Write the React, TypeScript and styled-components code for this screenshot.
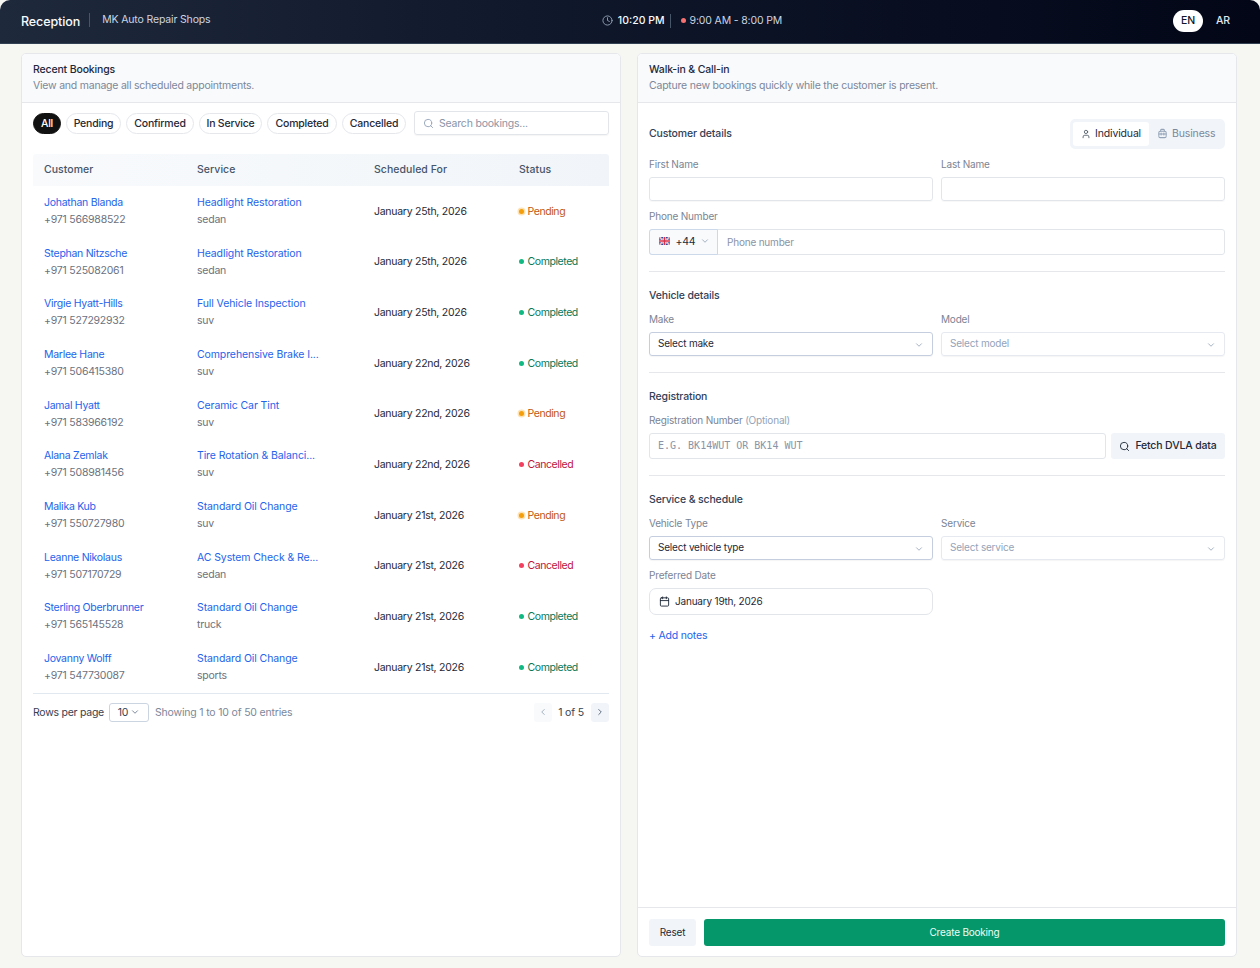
import React from "react";
import styled, { createGlobalStyle } from "styled-components";
import { Calendar, ChevronDown, ChevronLeft, ChevronRight, Clock, Search, User } from "lucide-react";

const Global = createGlobalStyle`
  html, body { margin: 0; padding: 0; height: 100%; background: #f6f7f2; }
  * { box-sizing: border-box; }
  body { font-family: Inter, "Open Sans", sans-serif; color: #111827; font-size: 11px; letter-spacing: -0.15px; }
`;
const Page = styled.div`width: 1260px; height: 968px; overflow: hidden; background: #f6f7f2; display: flex; flex-direction: column;`;
const Header = styled.header`
  height: 44px; flex: none; display: flex; justify-content: space-between; align-items: center; padding: 0 22px 2px 21px;
  background: linear-gradient(90deg, #1e293b 0%, #0f172a 45%, #020617 100%); border-radius: 10px 10px 0 0; border-bottom: 1px solid #334155; color: #fff;
`;
const Brand = styled.div`display: flex; align-items: center; gap: 9px; width: 190px;`;
const BrandName = styled.span`font-size: 12.5px; font-weight: 500; color: #f8fafc; letter-spacing: -0.1px; margin-top: 2px;`;
const Shop = styled.span`font-size: 10.5px; color: #cbd5e1; border-left: 1px solid #475569; padding-left: 12px; line-height: 14px; margin-top: -1px;`;
const Hours = styled.div`display: flex; align-items: center; font-size: 10.5px; color: #cbd5e1; svg { color: #94a3b8; margin-right: 5px; }`;
const Now = styled.span`color: #f8fafc; font-weight: 500; padding-right: 5px; margin-right: 10px; border-right: 1px solid #475569; line-height: 14px; letter-spacing: 0;`;
const RedDot = styled.i`width: 5px; height: 5px; border-radius: 50%; background: #f87171; margin-right: 4px;`;
const Lang = styled.div`display: flex; align-items: center; gap: 5px;`;
const LangItem = styled.span<{ $on?: boolean }>`
  width: 30px; height: 22px; border-radius: 11px; display: flex; align-items: center; justify-content: center; font-size: 10.5px; font-weight: 500;
  background: ${p => (p.$on ? "#fff" : "transparent")}; color: ${p => (p.$on ? "#0f172a" : "#e2e8f0")};
`;
const Main = styled.main`flex: 1; display: grid; grid-template-columns: 600px 600px; gap: 16px; padding: 9px 0 11px 21px;`;
const Card = styled.section`background: #fff; border: 1px solid #e5e7eb; border-radius: 5px; display: flex; flex-direction: column; overflow: hidden;`;
const CardHead = styled.div`height: 49px; flex: none; padding: 9px 11px 0; background: #f9fafc; border-bottom: 1px solid #e5e7eb;`;
const CardTitle = styled.div`font-size: 10.5px; font-weight: 500; color: #1e293b; line-height: 14px;`;
const CardSub = styled.div`font-size: 10.5px; color: #7c879a; line-height: 14px; margin-top: 2px; letter-spacing: -0.22px;`;
const ListBody = styled.div`padding: 8px 11px 0; flex: 1;`;
const Filters = styled.div`display: flex; align-items: center; height: 24px; margin-bottom: 19px;`;
const Chip = styled.span<{ $on?: boolean; $w: number }>`
  height: 21px; width: ${p => p.$w}px; margin-right: 5px; border-radius: 11px; display: flex; align-items: center; justify-content: center; font-size: 10.5px; font-weight: 500; letter-spacing: -0.2px;
  border: 1px solid ${p => (p.$on ? "#111" : "#e5e7eb")}; background: ${p => (p.$on ? "#111" : "#fff")}; color: ${p => (p.$on ? "#fff" : "#1f2937")};
`;
const SearchBox = styled.div`
  margin-left: 3px; width: 195px; height: 24px; border: 1px solid #e2e5ea; border-radius: 3px; display: flex; align-items: center; gap: 5px; padding: 0 8px; color: #8a94a6; font-size: 10.5px; letter-spacing: -0.2px; box-shadow: 0 1px 1px rgba(0,0,0,.04);
  svg { color: #94a3b8; }
`;
const TableGrid = styled.div`display: grid; grid-template-columns: 153px 177px 145px 101px; align-items: center;`;
const TableHead = styled(TableGrid)`height: 32px; padding-bottom: 2px; background: linear-gradient(90deg, #f8fafc, #f1f5f9); border-radius: 3px 3px 0 0; font-size: 10.5px; color: #475569; font-weight: 500; letter-spacing: .05px; span { padding-left: 11px; }`;
const Row = styled(TableGrid)`height: 50.7px;`;
const Cell = styled.div`padding-left: 11px; min-width: 0;`;
const LinkText = styled.div`color: #2563eb; font-size: 10.5px; line-height: 14px; white-space: nowrap; overflow: hidden; text-overflow: ellipsis; letter-spacing: -0.1px;`;
const NameText = styled(LinkText)`letter-spacing: -0.27px;`;
const Muted = styled.div`color: #6b7280; font-size: 10.5px; line-height: 14px; margin-top: 3px; letter-spacing: -0.22px;`;
const DateText = styled.div`padding-left: 11px; font-size: 10.5px; color: #1f2937; letter-spacing: -0.27px; margin-top: -0.4px;`;
const statusColors: Record<string, [string, string]> = {
  Pending: ["#f59e0b", "#c2570c"], Completed: ["#10b981", "#047857"], Cancelled: ["#f43f5e", "#be123c"],
};
const Status = styled.div<{ $s: string }>`
  padding-left: 10.5px; display: flex; align-items: center; gap: 4px; font-size: 10.5px; letter-spacing: -0.42px; margin-top: -0.4px; color: ${p => statusColors[p.$s][1]};
  &::before { content: ""; width: 5px; height: 5px; border-radius: 50%; background: ${p => statusColors[p.$s][0]}; ${p => (p.$s === "Pending" ? "box-shadow: 0 0 0 1.5px rgba(245,158,11,.3);" : "")} }
`;
const Pager = styled.div`border-top: 1px solid #e2e8f0; height: 38px; display: flex; align-items: center; font-size: 10.5px; color: #374151; letter-spacing: -0.25px;`;
const RowsSelect = styled.span`margin: 0 6px 0 5px; width: 40px; height: 19px; border: 1px solid #cbd5e1; border-radius: 3px; display: flex; align-items: center; justify-content: center; gap: 2px; svg { color: #64748b; }`;
const Showing = styled.span`color: #7c879a; flex: 1; letter-spacing: -0.18px;`;
const PageBtn = styled.span<{ $dim?: boolean }>`width: 18px; height: 19px; border-radius: 3px; display: flex; align-items: center; justify-content: center; background: ${p => (p.$dim ? "#f8fafc" : "#f1f5f9")}; color: ${p => (p.$dim ? "#94a3b8" : "#475569")};`;
const PageNo = styled.span`margin: 0 7px 0 6px; color: #374151; letter-spacing: -0.15px;`;
const FormBody = styled.div`flex: 1; padding: 16px 11px 0;`;
const SectionTop = styled.div`display: flex; justify-content: space-between; align-items: center; height: 30px;`;
const SectionTitle = styled.div`font-size: 10.5px; font-weight: 500; color: #334155; line-height: 14px;`;
const Toggle = styled.div`width: 155px; height: 30px; background: #f1f5f9; border-radius: 5px; padding: 3px; display: flex; align-items: center; padding-bottom: 4px;`;
const ToggleItem = styled.span<{ $on?: boolean }>`
  height: 24px; border-radius: 3px; display: flex; align-items: center; gap: 4px; padding: 0 8px; font-size: 10.5px; background: ${p => (p.$on ? "#fff" : "transparent")}; color: ${p => (p.$on ? "#1f2937" : "#7c879a")};
  svg { color: ${p => (p.$on ? "#4b5563" : "#94a3b8")}; }
`;
const TwoCols = styled.div<{ $top: number }>`display: grid; grid-template-columns: 284px 284px; gap: 8px; margin-top: ${p => p.$top}px;`;
const Label = styled.div`font-size: 10px; color: #7b8494; line-height: 13px; margin-bottom: 6px; letter-spacing: -0.18px; em { font-style: normal; color: #94a3b8; }`;
const Field = styled.div<{ $top?: number }>`min-width: 0; margin-top: ${p => p.$top ?? 0}px;`;
const Input = styled.div`height: 24px; border: 1px solid #e2e5ea; border-radius: 3px; box-shadow: 0 1px 1px rgba(0,0,0,.03);`;
const Phone = styled.div`height: 26px; border: 1px solid #e2e5ea; border-radius: 3px; display: flex; align-items: center; color: #8a94a6; font-size: 10px; letter-spacing: -0.2px; padding-bottom: 1px;`;
const Dial = styled.span`width: 69px; height: 26px; margin: -1px 9px -1px -1px; border: 1px solid #cbd9ea; border-radius: 3px 0 0 3px; background: #f8fafc; display: flex; align-items: center; gap: 5.5px; padding-left: 9px; color: #1f2937; font-size: 10.5px; padding-bottom: 1px; svg.c { color: #94a3b8; margin-left: -1px; }`;
const Divider = styled.hr`border: 0; border-top: 1px solid #e5e7eb; margin: 16px 0 17px;`;
const Select = styled.div<{ $off?: boolean }>`
  height: 24px; padding: 0 8px 2px; border: 1px solid ${p => (p.$off ? "#e6e9f0" : "#c5cede")}; border-radius: 3px; display: flex; align-items: center; justify-content: space-between; font-size: 10px; letter-spacing: -0.2px;
  color: ${p => (p.$off ? "#94a3b8" : "#1f2937")}; box-shadow: 0 1px 1px rgba(0,0,0,.04); svg { color: #94a3b8; margin-top: 3px; }
`;
const RegRow = styled.div`display: flex; gap: 5px;`;
const RegInput = styled.div`flex: 1; height: 26px; border: 1px solid #e2e5ea; border-radius: 3px; display: flex; align-items: center; padding: 0 0 2px 8px; font-family: "DejaVu Sans Mono", "Liberation Mono", monospace; font-size: 10px; letter-spacing: 0; color: #8a94a6;`;
const Fetch = styled.div`width: 114px; height: 26px; background: #f1f5f9; border-radius: 3px; display: flex; align-items: center; justify-content: center; gap: 5px; padding-bottom: 1px; font-size: 10.5px; font-weight: 500; color: #1f2937; svg { margin-top: 2px; }`;
const DateBox = styled.div`height: 27px; border: 1px solid #e2e5ea; border-radius: 7px; display: flex; align-items: center; gap: 5px; padding: 0 0 2px 9px; font-size: 10px; letter-spacing: -0.2px; color: #1f2937; svg { margin-top: 2px; }`;
const AddNotes = styled.div`margin-top: 14px; color: #2563eb; font-size: 10.5px; line-height: 14px; letter-spacing: -0.2px;`;
const FormFoot = styled.div`height: 49px; flex: none; border-top: 1px solid #e5e7eb; padding: 11px; display: flex; gap: 8px;`;
const Reset = styled.div`width: 47px; height: 27px; background: #f1f5f9; border-radius: 3px; display: flex; align-items: center; justify-content: center; font-size: 10px; color: #1f2937; padding-bottom: 2px;`;
const Create = styled.div`flex: 1; height: 27px; background: #059669; border-radius: 3px; display: flex; align-items: center; justify-content: center; font-size: 10px; letter-spacing: -0.2px; color: #ecfdf5; padding-bottom: 2px;`;

const chips: [string, number][] = [["All", 28], ["Pending", 55], ["Confirmed", 68], ["In Service", 63], ["Completed", 70], ["Cancelled", 64]];
const rows = [
  ["Johathan Blanda", "+971 566988522", "Headlight Restoration", "sedan", "January 25th, 2026", "Pending"],
  ["Stephan Nitzsche", "+971 525082061", "Headlight Restoration", "sedan", "January 25th, 2026", "Completed"],
  ["Virgie Hyatt-Hills", "+971 527292932", "Full Vehicle Inspection", "suv", "January 25th, 2026", "Completed"],
  ["Marlee Hane", "+971 506415380", "Comprehensive Brake I...", "suv", "January 22nd, 2026", "Completed"],
  ["Jamal Hyatt", "+971 583966192", "Ceramic Car Tint", "suv", "January 22nd, 2026", "Pending"],
  ["Alana Zemlak", "+971 508981456", "Tire Rotation & Balanci...", "suv", "January 22nd, 2026", "Cancelled"],
  ["Malika Kub", "+971 550727980", "Standard Oil Change", "suv", "January 21st, 2026", "Pending"],
  ["Leanne Nikolaus", "+971 507170729", "AC System Check & Re...", "sedan", "January 21st, 2026", "Cancelled"],
  ["Sterling Oberbrunner", "+971 565145528", "Standard Oil Change", "truck", "January 21st, 2026", "Completed"],
  ["Jovanny Wolff", "+971 547730087", "Standard Oil Change", "sports", "January 21st, 2026", "Completed"],
];

const Flag = () => (
  <svg width="11" height="8" viewBox="0 0 22 16">
    <rect width="22" height="16" rx="1.5" fill="#2b4a9b" />
    <path d="M0 0L22 16M22 0L0 16" stroke="#fff" strokeWidth="3.4" />
    <path d="M0 0L22 16M22 0L0 16" stroke="#d6304a" strokeWidth="1.2" />
    <path d="M11 0V16M0 8H22" stroke="#fff" strokeWidth="5" />
    <path d="M11 0V16M0 8H22" stroke="#d6304a" strokeWidth="3" />
  </svg>
);

const BusinessIcon = () => (
  <svg width="11" height="11" viewBox="0 0 24 24" fill="none" stroke="currentColor" strokeWidth="2.2" strokeLinecap="round" strokeLinejoin="round">
    <rect x="4" y="7" width="16" height="14" rx="3" />
    <path d="M8 7V5a2 2 0 0 1 2-2h4a2 2 0 0 1 2 2v2" />
    <path d="M4 13h16M9 11v4M15 11v4" />
  </svg>
);

export default function App() {
  return (
    <Page>
      <Global />
      <Header>
        <Brand><BrandName>Reception</BrandName><Shop>MK Auto Repair Shops</Shop></Brand>
        <Hours><Clock size={11} /><Now>10:20 PM</Now><RedDot />9:00 AM - 8:00 PM</Hours>
        <Lang><LangItem $on>EN</LangItem><LangItem>AR</LangItem></Lang>
      </Header>
      <Main>
        <Card>
          <CardHead><CardTitle>Recent Bookings</CardTitle><CardSub>View and manage all scheduled appointments.</CardSub></CardHead>
          <ListBody>
            <Filters>
              {chips.map(([c, w], i) => <Chip key={c} $w={w} $on={i === 0}>{c}</Chip>)}
              <SearchBox><Search size={11} />Search bookings...</SearchBox>
            </Filters>
            <TableHead><span>Customer</span><span>Service</span><span>Scheduled For</span><span>Status</span></TableHead>
            {rows.map(r => (
              <Row key={r[0]}>
                <Cell><NameText>{r[0]}</NameText><Muted>{r[1]}</Muted></Cell>
                <Cell><LinkText>{r[2]}</LinkText><Muted>{r[3]}</Muted></Cell>
                <DateText>{r[4]}</DateText>
                <Status $s={r[5]}>{r[5]}</Status>
              </Row>
            ))}
            <Pager>
              Rows per page
              <RowsSelect>10<ChevronDown size={10} /></RowsSelect>
              <Showing>Showing 1 to 10 of 50 entries</Showing>
              <PageBtn $dim><ChevronLeft size={10} /></PageBtn>
              <PageNo>1 of 5</PageNo>
              <PageBtn><ChevronRight size={10} /></PageBtn>
            </Pager>
          </ListBody>
        </Card>
        <Card>
          <CardHead><CardTitle>Walk-in &amp; Call-in</CardTitle><CardSub>Capture new bookings quickly while the customer is present.</CardSub></CardHead>
          <FormBody>
            <SectionTop>
              <SectionTitle>Customer details</SectionTitle>
              <Toggle>
                <ToggleItem $on><User size={10} />Individual</ToggleItem>
                <ToggleItem><BusinessIcon />Business</ToggleItem>
              </Toggle>
            </SectionTop>
            <TwoCols $top={9}>
              <Field><Label>First Name</Label><Input /></Field>
              <Field><Label>Last Name</Label><Input /></Field>
            </TwoCols>
            <Field $top={9}>
              <Label>Phone Number</Label>
              <Phone><Dial><Flag />+44<ChevronDown className="c" size={10} /></Dial>Phone number</Phone>
            </Field>
            <Divider />
            <SectionTitle>Vehicle details</SectionTitle>
            <TwoCols $top={10}>
              <Field><Label>Make</Label><Select>Select make<ChevronDown size={10} /></Select></Field>
              <Field><Label>Model</Label><Select $off>Select model<ChevronDown size={10} /></Select></Field>
            </TwoCols>
            <Divider />
            <SectionTitle>Registration</SectionTitle>
            <Field $top={10}>
              <Label>Registration Number <em>(Optional)</em></Label>
              <RegRow><RegInput>E.G. BK14WUT OR BK14 WUT</RegInput><Fetch><Search size={11} />Fetch DVLA data</Fetch></RegRow>
            </Field>
            <Divider />
            <SectionTitle>Service &amp; schedule</SectionTitle>
            <TwoCols $top={10}>
              <Field><Label>Vehicle Type</Label><Select>Select vehicle type<ChevronDown size={10} /></Select></Field>
              <Field><Label>Service</Label><Select $off>Select service<ChevronDown size={10} /></Select></Field>
            </TwoCols>
            <TwoCols $top={9}>
              <Field><Label>Preferred Date</Label><DateBox><Calendar size={11} />January 19th, 2026</DateBox></Field>
            </TwoCols>
            <AddNotes>+ Add notes</AddNotes>
          </FormBody>
          <FormFoot><Reset>Reset</Reset><Create>Create Booking</Create></FormFoot>
        </Card>
      </Main>
    </Page>
  );
}
